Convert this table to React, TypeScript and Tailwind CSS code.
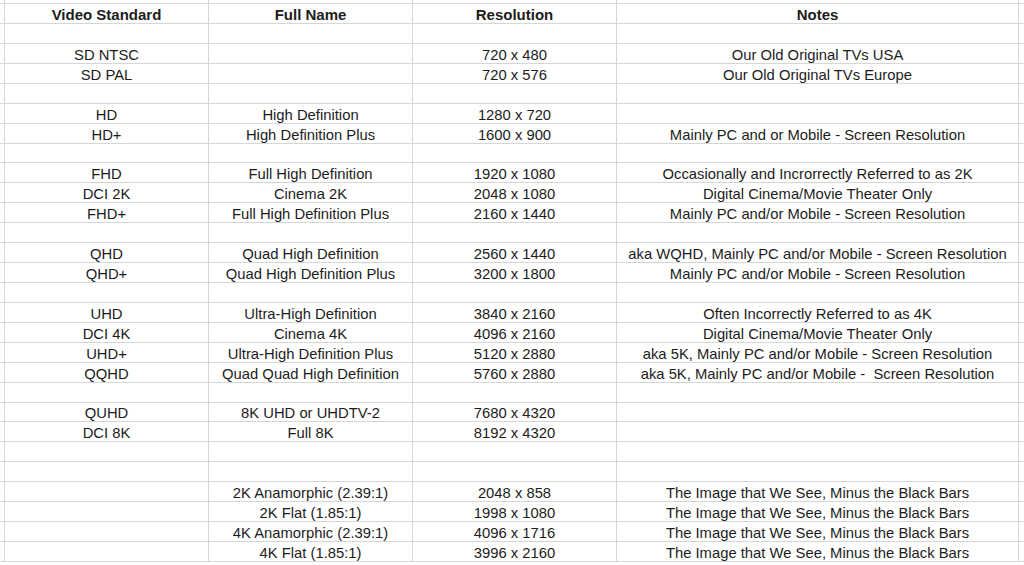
import React from "react";

type Row = [string, string, string, string];

const rows: Row[] = [
  ["", "", "", ""],
  ["SD NTSC", "", "720 x 480", "Our Old Original TVs USA"],
  ["SD PAL", "", "720 x 576", "Our Old Original TVs Europe"],
  ["", "", "", ""],
  ["HD", "High Definition", "1280 x 720", ""],
  ["HD+", "High Definition Plus", "1600 x 900", "Mainly PC and or Mobile - Screen Resolution"],
  ["", "", "", ""],
  ["FHD", "Full High Definition", "1920 x 1080", "Occasionally and Incrorrectly Referred to as 2K"],
  ["DCI 2K", "Cinema 2K", "2048 x 1080", "Digital Cinema/Movie Theater Only"],
  ["FHD+", "Full High Definition Plus", "2160 x 1440", "Mainly PC and/or Mobile - Screen Resolution"],
  ["", "", "", ""],
  ["QHD", "Quad High Definition", "2560 x 1440", "aka WQHD, Mainly PC and/or Mobile - Screen Resolution"],
  ["QHD+", "Quad High Definition Plus", "3200 x 1800", "Mainly PC and/or Mobile - Screen Resolution"],
  ["", "", "", ""],
  ["UHD", "Ultra-High Definition", "3840 x 2160", "Often Incorrectly Referred to as 4K"],
  ["DCI 4K", "Cinema 4K", "4096 x 2160", "Digital Cinema/Movie Theater Only"],
  ["UHD+", "Ultra-High Definition Plus", "5120 x 2880", "aka 5K, Mainly PC and/or Mobile - Screen Resolution"],
  ["QQHD", "Quad Quad High Definition", "5760 x 2880", "aka 5K, Mainly PC and/or Mobile -  Screen Resolution"],
  ["", "", "", ""],
  ["QUHD", "8K UHD or UHDTV-2", "7680 x 4320", ""],
  ["DCI 8K", "Full 8K", "8192 x 4320", ""],
  ["", "", "", ""],
  ["", "", "", ""],
  ["", "2K Anamorphic (2.39:1)", "2048 x 858", "The Image that We See, Minus the Black Bars"],
  ["", "2K Flat (1.85:1)", "1998 x 1080", "The Image that We See, Minus the Black Bars"],
  ["", "4K Anamorphic (2.39:1)", "4096 x 1716", "The Image that We See, Minus the Black Bars"],
  ["", "4K Flat (1.85:1)", "3996 x 2160", "The Image that We See, Minus the Black Bars"],
];

const cell =
  "border-r border-b border-[#d6d6d6] flex items-center justify-center whitespace-pre overflow-visible";

function GridRow({ cells, h, bold }: { cells: string[]; h: string; bold?: boolean }) {
  return (
    <>
      <div className={`${cell} ${h}`} />
      {cells.map((c, i) => (
        <div
          key={i}
          className={`${cell} ${h} ${bold ? "font-bold text-[15px]" : "text-[14.8px]"} pt-[3px]`}
        >
          {c}
        </div>
      ))}
      <div className={`${cell} ${h} border-r-0`} />
    </>
  );
}

export default function App() {
  return (
    <div
      className="w-[1024px] h-[565px] overflow-hidden bg-white text-[#1c1c1c]"
      style={{ fontFamily: '"Liberation Sans", Arial, sans-serif' }}
    >
      <div className="grid grid-cols-[5px_204px_204px_204px_402px_1fr] leading-[18px]">
        <GridRow cells={["", "", "", ""]} h="h-[4px]" />
        <GridRow cells={["Video Standard", "Full Name", "Resolution", "Notes"]} h="h-[20px]" bold />
        {rows.map((r, i) => (
          <GridRow key={i} cells={r} h="h-[19.93px]" />
        ))}
      </div>
    </div>
  );
}
